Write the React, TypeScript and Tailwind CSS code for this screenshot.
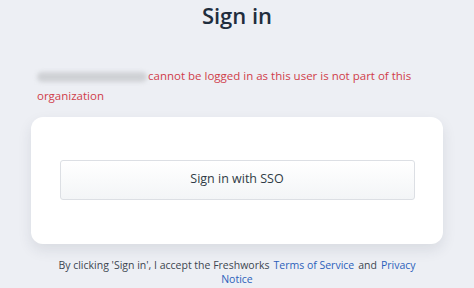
import React from 'react';

export default function App() {
  return (
    <div
      className="w-[474px] h-[288px] overflow-hidden bg-[#edeff4] flex flex-col"
      style={{ fontFamily: '"Open Sans", "Noto Sans", sans-serif' }}
    >
      <h1 className="text-center text-[22px] leading-[30px] font-semibold text-[#1f2d3d]">
        Sign in
      </h1>

      <div className="mt-[36px] pl-[37px] pr-[60px] text-[11.5px] leading-[20px] text-[#d03d4a]">
        <span className="inline-block align-middle w-[110px] h-[10px] rounded-full bg-[#cfd1d5] blur-[2px] mr-[1px]" />
        cannot be logged in as this user is not part of this organization
      </div>

      <div className="mx-[31px] mt-[11px] h-[127px] rounded-[12px] bg-white shadow-[0_6px_14px_rgba(40,50,70,0.10)] flex items-center justify-center">
        <button className="w-[355px] h-[40px] mt-[-2px] rounded-[3px] border border-[#dcdfe4] bg-gradient-to-b from-white to-[#f3f5f7] text-[12.5px] text-[#2f3a45]">
          Sign in with SSO
        </button>
      </div>

      <div className="mt-[14px] flex flex-col items-center text-[10.5px] leading-[14px] text-[#3c4650]">
        <p className="flex gap-[4px] whitespace-nowrap">
          <span>By clicking 'Sign in', I accept the Freshworks</span>
          <span className="text-[#2c5fbb]">Terms of Service</span>
          <span>and</span>
          <span className="text-[#2c5fbb]">Privacy</span>
        </p>
        <p className="text-[#2c5fbb]">Notice</p>
      </div>
    </div>
  );
}
